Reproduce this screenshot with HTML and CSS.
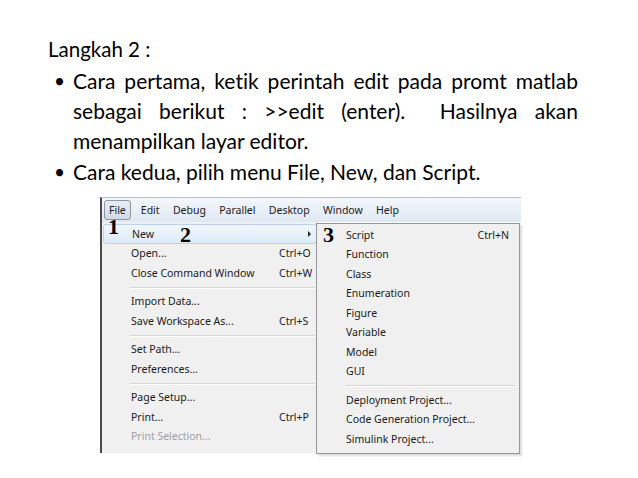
FILE: index.html
```html
<!DOCTYPE html>
<html>
<head>
<meta charset="utf-8">
<link rel="stylesheet" href="styles.css">
</head>
<body>
<div class="slide">
  <div class="text">
    <p class="heading">Langkah 2 :</p>
    <ul class="bullets">
      <li>Cara pertama, ketik perintah edit pada promt matlab sebagai berikut : &gt;&gt;edit (enter).&nbsp; Hasilnya akan menampilkan layar editor.</li>
      <li class="last">Cara kedua, pilih menu File, New, dan Script.</li>
    </ul>
  </div>
  <div class="shot">
    <div class="menubar">
      <span class="mi file">File</span>
      <span class="mi">Edit</span>
      <span class="mi">Debug</span>
      <span class="mi">Parallel</span>
      <span class="mi">Desktop</span>
      <span class="mi">Window</span>
      <span class="mi">Help</span>
    </div>
    <div class="menus">
      <div class="filemenu">
        <div class="row hl"><span class="lbl">New</span><span class="arrow"></span></div>
        <div class="row"><span class="lbl">Open...</span><span class="sc">Ctrl+O</span></div>
        <div class="row"><span class="lbl">Close Command Window</span><span class="sc">Ctrl+W</span></div>
        <div class="sep"></div>
        <div class="row"><span class="lbl">Import Data...</span></div>
        <div class="row"><span class="lbl">Save Workspace As...</span><span class="sc">Ctrl+S</span></div>
        <div class="sep"></div>
        <div class="row"><span class="lbl">Set Path...</span></div>
        <div class="row"><span class="lbl">Preferences...</span></div>
        <div class="sep"></div>
        <div class="row"><span class="lbl">Page Setup...</span></div>
        <div class="row"><span class="lbl">Print...</span><span class="sc">Ctrl+P</span></div>
        <div class="row dis"><span class="lbl">Print Selection...</span></div>
      </div>
      <div class="submenu">
        <div class="row"><span class="lbl">Script</span><span class="sc">Ctrl+N</span></div>
        <div class="row"><span class="lbl">Function</span></div>
        <div class="row"><span class="lbl">Class</span></div>
        <div class="row"><span class="lbl">Enumeration</span></div>
        <div class="row"><span class="lbl">Figure</span></div>
        <div class="row"><span class="lbl">Variable</span></div>
        <div class="row"><span class="lbl">Model</span></div>
        <div class="row"><span class="lbl">GUI</span></div>
        <div class="sep"></div>
        <div class="row"><span class="lbl">Deployment Project...</span></div>
        <div class="row"><span class="lbl">Code Generation Project...</span></div>
        <div class="row"><span class="lbl">Simulink Project...</span></div>
      </div>
    </div>
    <span class="num n1">1</span>
    <span class="num n2">2</span>
    <span class="num n3">3</span>
  </div>
</div>
</body>
</html>
```

FILE: styles.css
```css
* { box-sizing: border-box; }
html, body { margin: 0; padding: 0; background: #fff; }
.slide {
  width: 638px;
  height: 478px;
  overflow: hidden;
  position: relative;
  background: #fff;
}
.text {
  padding: 35px 60px 0 48px;
  font-family: Lato, "Liberation Sans", sans-serif;
  font-variant-ligatures: none;
  color: #000;
}
.heading { margin: 0; line-height: 28px; font-size: 20.5px; }
.bullets {
  list-style: none;
  margin: 3px 0 0 0;
  padding: 0 0 0 25px;
  font-size: 21px;
}
.bullets li {
  position: relative;
  line-height: 30px;
  text-align: justify;
  margin-bottom: 1px;
}
.bullets li::before {
  content: "\2022";
  position: absolute;
  left: -19px;
  top: 0;
  font-size: 19px;
}
.bullets li.last { text-align: left; }

.shot {
  position: relative;
  margin: 10px 0 0 100px;
  width: 421px;
  font-family: "Noto Sans", "Open Sans", sans-serif;
  font-size: 10.5px;
  color: #1a1a1a;
}
.menubar {
  height: 25px;
  border-top: 1px solid #b9c2cc;
  border-left: 2px solid #4a4a4a;
  background: linear-gradient(#f4f7fb, #dfe8f3);
  display: flex;
  align-items: center;
  padding-left: 2px;
}
.mi { padding: 3px 5px; margin-right: 3.3px; line-height: 14px; }
.mi.file {
  border: 1px solid #8a96a4;
  border-radius: 3px;
  background: linear-gradient(#e8edf3, #d3dbe5);
  padding: 2px 4px;
  margin-right: 5px;
}
.menus { display: flex; align-items: flex-start; }
.filemenu {
  width: 217px;
  height: 231px;
  background: #f0f0f0;
  border-left: 2px solid #4a4a4a;
  padding: 2px 0 0 1px;
}
.submenu {
  width: 204px;
  height: 231px;
  margin-left: -1px;
  margin-top: 1px;
  background: #f0f0f0;
  border: 1px solid #979797;
  padding: 1px 2px 0 2px;
  box-shadow: 2px 2px 2px rgba(0,0,0,0.15);
}
.row {
  height: 19.5px;
  display: flex;
  align-items: center;
  padding-left: 28px;
  padding-right: 6px;
}
.row .lbl { flex: 1; }
.row .sc { width: 32px; }
.submenu .row { padding-left: 27px; padding-right: 8px; }
.submenu .row .sc { width: auto; }
.row.hl {
  background: linear-gradient(#f1f7fd, #dceaf8);
  border: 1px solid #b8d3ef;
  border-radius: 3px;
  padding-right: 8px;
}
.row.dis { color: #a0a0a0; }
.arrow {
  width: 0; height: 0;
  border-top: 3px solid transparent;
  border-bottom: 3px solid transparent;
  border-left: 3px solid #222;
  margin-right: -3px;
}
.sep {
  height: 9px;
  margin-left: 27px;
  position: relative;
}
.sep::after {
  content: "";
  position: absolute;
  left: 0; right: 2px; top: 4px;
  height: 1px;
  background: #d6d6d6;
  border-bottom: 1px solid #fff;
}
.num {
  position: absolute;
  font-family: "Liberation Serif", serif;
  font-weight: bold;
  font-size: 22px;
  line-height: 1;
  color: #000;
}
.n1 { left: 8px; top: 19px; }
.n2 { left: 80px; top: 27px; }
.n3 { left: 223px; top: 27px; }
```
